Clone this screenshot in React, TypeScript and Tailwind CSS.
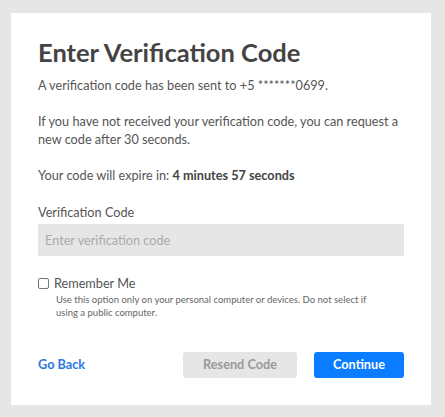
import { useState } from 'react';

export default function App() {
  const [code, setCode] = useState('');
  const [remember, setRemember] = useState(false);

  return (
    <div
      className="min-h-[417px] w-full bg-[#e6e6e6] pt-[13px] pl-[11px]"
      style={{ fontFamily: 'Lato, "Open Sans", sans-serif' }}
    >
      <div className="w-[420px] h-[392px] bg-white pl-[27px] pr-[26px] pt-[23px]">
        <h1 className="text-[25.5px] leading-[32px] font-bold text-[#444]">Enter Verification Code</h1>
        <p className="mt-[8px] text-[12.7px] leading-[18px] text-[#555]">
          A verification code has been sent to +5 *******0699.
        </p>
        <p className="mt-[18px] text-[12.7px] leading-[18px] text-[#555]">
          If you have not received your verification code, you can request a new code after 30 seconds.
        </p>
        <p className="mt-[18px] text-[12.7px] leading-[18px] text-[#555]">
          Your code will expire in: <span className="font-bold text-[#444]">4 minutes 57 seconds</span>
        </p>

        {/* Code input */}
        <label className="block mt-[19px] text-[12.7px] leading-[18px] text-[#555]">Verification Code</label>
        <input
          value={code}
          onChange={(e) => setCode(e.target.value)}
          placeholder="Enter verification code"
          className="mt-[3px] block w-[366px] h-[32px] bg-[#e6e6e6] px-[7px] text-[12.7px] text-[#555] placeholder:text-[#aaa] outline-none"
        />

        {/* Remember me */}
        <div className="mt-[19px] flex items-center gap-[5px]">
          <input
            type="checkbox"
            checked={remember}
            onChange={() => setRemember(!remember)}
            className="w-[11px] h-[11px] m-0 appearance-none border border-[#777] rounded-[2px] bg-white"
          />
          <span className="text-[12.7px] leading-[16px] text-[#555]">Remember Me</span>
        </div>
        <p className="mt-[2px] ml-[18px] w-[326px] text-[9.5px] leading-[13px] text-[#666]">
          Use this option only on your personal computer or devices. Do not select if using a public computer.
        </p>

        {/* Actions */}
        <div className="mt-[33px] flex items-center w-[366px]">
          <button className="text-[12.7px] font-bold text-[#2a78e0]">Go Back</button>
          <div className="ml-auto flex gap-[17px]">
            <button className="w-[114px] h-[26px] rounded-[3px] bg-[#e6e6e6] text-[12.7px] font-bold text-[#999]">
              Resend Code
            </button>
            <button className="w-[90px] h-[26px] rounded-[3px] bg-[#0a7cff] text-[12.7px] font-bold text-white">
              Continue
            </button>
          </div>
        </div>
      </div>
    </div>
  );
}
